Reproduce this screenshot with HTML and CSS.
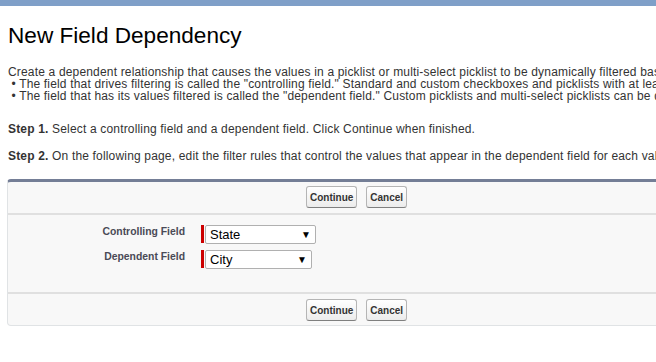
FILE: index.html
```html
<!DOCTYPE html>
<html lang="en">
<head>
  <meta charset="UTF-8">
  <title>New Field Dependency</title>
  <link rel="stylesheet" href="styles.css">
</head>
<body>
  <div class="top-band"></div>
  <div class="page">
    <h1>New Field Dependency</h1>
    <div class="intro">
      <p>Create a dependent relationship that causes the values in a picklist or multi-select picklist to be dynamically filtered based on the value selected by the user in another field.</p>
      <p>&nbsp;&bull; The field that drives filtering is called the "controlling field." Standard and custom checkboxes and picklists with at least one and less than 300 values can be controlling fields.</p>
      <p>&nbsp;&bull; The field that has its values filtered is called the "dependent field." Custom picklists and multi-select picklists can be dependent fields.</p>
    </div>
    <p class="step"><b>Step 1.</b> Select a controlling field and a dependent field. Click Continue when finished.</p>
    <p class="step"><b>Step 2.</b> On the following page, edit the filter rules that control the values that appear in the dependent field for each value in the controlling field.</p>

    <div class="edit-box">
      <div class="btn-row">
        <button class="btn">Continue</button>
        <button class="btn">Cancel</button>
      </div>
      <div class="fields">
        <div class="field-row">
          <label class="field-label">Controlling Field</label>
          <span class="required"></span>
          <span class="select select-state">State<span class="arrow">&#9660;</span></span>
        </div>
        <div class="field-row">
          <label class="field-label">Dependent Field</label>
          <span class="required"></span>
          <span class="select select-city">City<span class="arrow">&#9660;</span></span>
        </div>
      </div>
      <div class="btn-row btn-row-bottom">
        <button class="btn">Continue</button>
        <button class="btn">Cancel</button>
      </div>
    </div>
  </div>
</body>
</html>
```

FILE: styles.css
```css
/* Global Styles */
* {
  margin: 0;
  padding: 0;
  box-sizing: border-box;
}

body {
  font-family: "Liberation Sans", Arial, sans-serif;
  color: #333;
  background: #fff;
  overflow: hidden;
}

.top-band {
  height: 6px;
  background: #7f9fc8;
}

.page {
  padding: 0 0 0 7px;
  width: 1400px;
}

h1 {
  font-weight: normal;
  font-size: 22.6px;
  line-height: 26px;
  color: #000;
  margin: 17px 0 0 1px;
}

.intro {
  margin: 17px 0 0 1px;
  font-size: 12px;
  line-height: 12px;
  letter-spacing: 0.17px;
  color: #333;
}

.intro p {
  white-space: nowrap;
}

.step {
  font-size: 12px;
  letter-spacing: 0.17px;
  line-height: 14px;
  margin: 20px 0 0 1px;
  white-space: nowrap;
}

.step + .step {
  margin-top: 13px;
}

.edit-box {
  margin-top: 16px;
  background: #f8f8f8;
  border: 1px solid #e0e3e5;
  border-top: 3px solid #747e96;
  border-radius: 4px 4px 0 4px;
  width: 1200px;
}

.btn-row {
  padding: 4px 0 5px 298px;
  display: flex;
  gap: 9px;
  border-bottom: 2px solid #e0e0e0;
}

.btn-row-bottom {
  border-bottom: none;
  border-top: 2px solid #e0e0e0;
  padding-top: 5px;
  padding-bottom: 4px;
}

.btn {
  font-family: "Liberation Sans", Arial, sans-serif;
  font-weight: bold;
  font-size: 10px;
  color: #333;
  height: 22px;
  padding: 0 3px;
  background: linear-gradient(#ffffff, #ececec);
  border: 1px solid #b5b5b5;
  border-bottom-color: #7f7f7f;
  border-radius: 3px;
}

.fields {
  padding: 10px 0 17px;
}

.field-row {
  display: flex;
  align-items: center;
  height: 18px;
  margin-bottom: 7px;
}

.field-label {
  width: 177px;
  text-align: right;
  font-size: 10.4px;
  font-weight: bold;
  color: #4a4a56;
  margin-right: 16px;
  position: relative;
  top: -3px;
}

.required {
  width: 3px;
  height: 18px;
  background: #c00;
  margin-right: 1px;
}

.select {
  display: flex;
  align-items: center;
  justify-content: space-between;
  height: 19px;
  border: 1px solid #b0b0b0;
  border-radius: 2px;
  background: #fff;
  font-size: 13px;
  color: #000;
  padding: 0 4px 0 4px;
}

.select-state {
  width: 111px;
}

.select-city {
  width: 107px;
}

.arrow {
  font-size: 10px;
}
```
